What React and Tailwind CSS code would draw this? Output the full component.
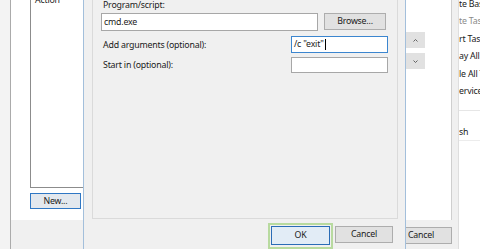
import React from 'react';

const actions = [
  { text: 'te Basic Task...', dim: false },
  { text: 'te Task...', dim: true },
  { text: 'rt Task...', dim: false },
  { text: 'ay All Running Tasks', dim: false },
  { text: 'le All Tasks History', dim: false },
  { text: 'ervice Account Configuration', dim: false },
];

const Caret = ({ up }) => (
  <svg width="5" height="3" viewBox="0 0 5 3" className="text-[#555]">
    <path d={up ? 'M0.5 2.5 L2.5 0.5 L4.5 2.5' : 'M0.5 0.5 L2.5 2.5 L4.5 0.5'} fill="none" stroke="currentColor" strokeWidth="0.9" />
  </svg>
);

const App = () => {
  return (
    <div
      className="w-[480px] h-[249px] overflow-hidden flex bg-[#f0f0f0] text-[8.8px] tracking-[-0.2px] text-[#1a1a1a]"
      style={{ fontFamily: '"Noto Sans", "Open Sans", sans-serif' }}
    >
      {/* background window, left */}
      <div className="w-[83px] flex shrink-0">
        <div className="w-[10px] bg-[#f3f3f3]"></div>
        <div className="w-px bg-[#ababab]"></div>
        <div className="flex-1 flex flex-col">
          <div className="h-[220px] bg-white pl-[19px] overflow-hidden">
            <div className="h-[188px] border-l border-b border-[#8c8c8c] overflow-hidden">
              <div className="pl-[4px] mt-[-6px] leading-[12px]">Action</div>
            </div>
            <div className="mt-[5px] w-[51px] h-[16px] border border-[#2f77c4] bg-[#e3e8ee] flex items-center justify-center leading-none">
              New...
            </div>
          </div>
          <div className="flex-1 bg-[#f0f0f0]"></div>
        </div>
      </div>

      {/* Edit Action dialog */}
      <div className="w-[323px] shrink-0 border-l border-r border-[#a3bfdb] bg-[#f0f0f0] flex flex-col pl-[8px] pr-[7px]">
        <div className="h-[220px] border-l border-r border-b border-[#dadada] flex flex-col">
          <div className="pl-[10px] mt-[-1px] leading-[12px]">Program/script:</div>
          <div className="mt-[2px] flex pl-[8px]">
            <div className="w-[217px] h-[18px] border border-[#a7a7a7] bg-white flex items-center pl-[2px] leading-none">
              cmd.exe
            </div>
            <div className="ml-[6px] w-[62px] h-[17px] border border-[#adadad] bg-[#e1e1e1] flex items-center justify-center leading-none">
              Browse...
            </div>
          </div>
          <div className="mt-[5px] flex items-center pl-[10px] pr-[9px] justify-between">
            <span className="leading-[12px]">Add arguments (optional):</span>
            <div className="w-[97px] h-[17px] border border-[#3c86cf] bg-white flex items-center pl-[2px] leading-none">
              <span>/c "exit"</span>
              <span className="w-px h-[11px] bg-black ml-px"></span>
            </div>
          </div>
          <div className="mt-[4px] flex items-center pl-[10px] pr-[9px] justify-between">
            <span className="leading-[12px]">Start in (optional):</span>
            <div className="w-[97px] h-[16px] border border-[#a7a7a7] bg-white"></div>
          </div>
        </div>
        <div className="mt-[4px] flex justify-end gap-[2px] pr-[5px]">
          <div className="w-[65px] h-[26px] border-[2px] border-[#b8da9f] p-px">
            <div className="h-[19px] border border-[#2a6cb6] bg-[#e2ecf6] flex items-center justify-center leading-none">OK</div>
          </div>
          <div className="mt-[3px] w-[58px] h-[17px] border border-[#adadad] bg-[#e1e1e1] flex items-center justify-center leading-none">
            Cancel
          </div>
        </div>
      </div>

      {/* background window, right */}
      <div className="flex-1 flex">
        <div className="w-[46px] flex flex-col">
          <div className="h-[220px] bg-white border-r border-[#cfcfcf] flex flex-col">
            <div className="mt-[32px] w-[19px] h-[16px] bg-[#e1e1e1] flex items-center justify-center">
              <Caret up />
            </div>
            <div className="mt-[5px] w-[19px] h-[16px] bg-[#e1e1e1] flex items-center justify-center">
              <Caret />
            </div>
          </div>
          <div className="mt-[7px] h-[17px] border border-l-0 border-[#adadad] bg-[#e1e1e1] flex items-center pl-[2px] leading-none">
            Cancel
          </div>
        </div>
        <div className="w-[6px] bg-[#f0f0f0]"></div>
        <div className="flex-1 bg-white border-l border-[#dedede] overflow-hidden flex flex-col">
          <div className="mt-[-4px]">
            {actions.map((a) => (
              <div
                key={a.text}
                className={`h-[17.4px] flex items-center whitespace-nowrap ${a.dim ? 'text-[#8a8a8a]' : ''}`}
              >
                {a.text}
              </div>
            ))}
          </div>
          <div className="mt-[10px] border-t border-[#e6e6e6]"></div>
          <div className="mt-[15px] h-[12px] flex items-center whitespace-nowrap leading-none">sh</div>
          <div className="mt-[2px] border-t border-[#ececec]"></div>
        </div>
      </div>
    </div>
  );
};

export default App;
